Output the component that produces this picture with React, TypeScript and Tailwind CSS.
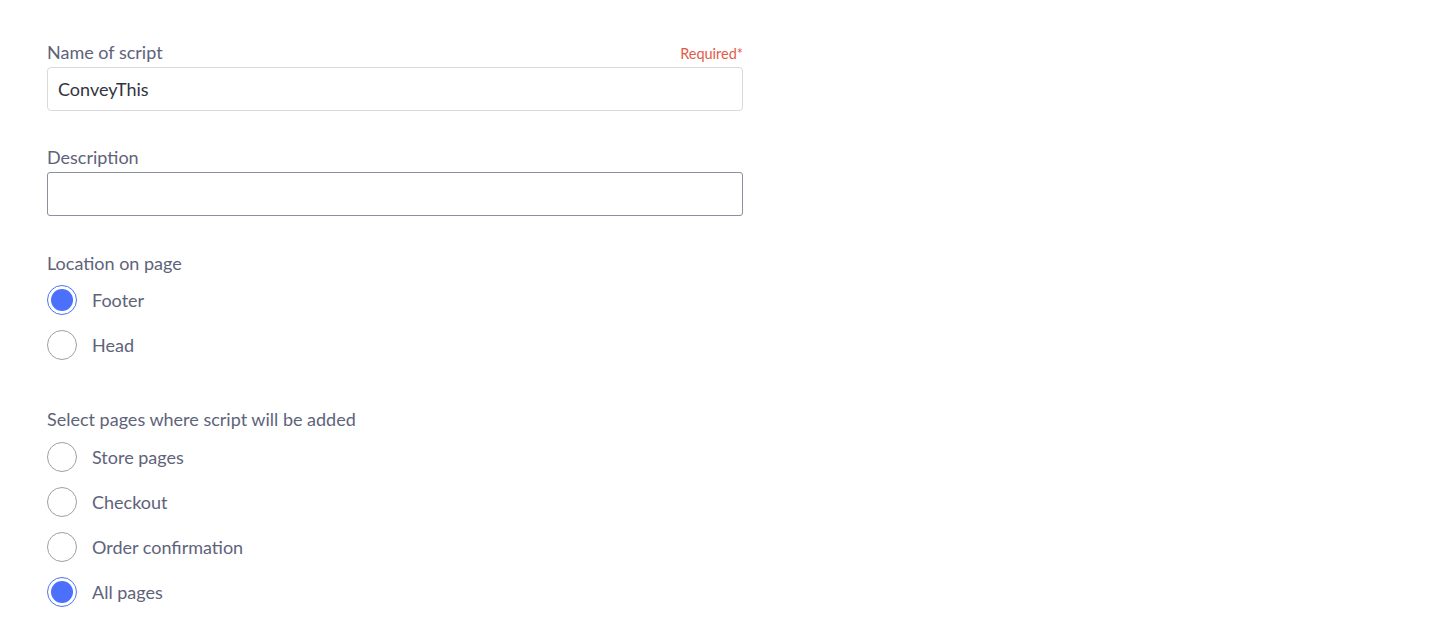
import React from "react";

// Script settings form: text inputs + radio groups

const font = { fontFamily: "Lato, 'Noto Sans', sans-serif" };

function Radio({ label, checked }: { label: string; checked?: boolean }) {
  return (
    <label className="flex items-center gap-[15px] h-[30px] cursor-pointer">
      {checked ? (
        <span className="w-[30px] h-[30px] rounded-full border border-[#4b71fc] p-[3px] flex">
          <span className="flex-1 rounded-full bg-[#4b71fc]" />
        </span>
      ) : (
        <span className="w-[30px] h-[30px] rounded-full border border-[#a0a0a0] bg-white" />
      )}
      <span className="text-[18px] leading-5 text-[#5e637a]">{label}</span>
    </label>
  );
}

export default function App() {
  return (
    <div className="min-h-screen bg-white pl-[47px] pt-[42px]" style={font}>
      <div className="w-[696px] flex flex-col">
        {/* Name of script */}
        <div className="flex items-end justify-between h-5 mb-[5px]">
          <span className="text-[18px] leading-5 text-[#5e637a]">Name of script</span>
          <span className="text-[14.5px] leading-4 text-[#e25b49]">Required*</span>
        </div>
        <div className="h-[44px] rounded-[4px] border border-[#d9d9dc] px-[10px] flex items-center text-[18px] text-[#313440]">
          ConveyThis
        </div>

        {/* Description */}
        <span className="mt-[36px] mb-[5px] text-[18px] leading-5 text-[#5e637a]">Description</span>
        <div className="h-[44px] rounded-[3px] border border-[#8c8f9c]" />

        {/* Location */}
        <span className="mt-[37px] mb-[12px] text-[18px] leading-5 text-[#5e637a]">Location on page</span>
        <div className="flex flex-col gap-[15px]">
          <Radio label="Footer" checked />
          <Radio label="Head" />
        </div>

        {/* Pages */}
        <span className="mt-[49px] mb-[13px] text-[18px] leading-5 text-[#5e637a]">
          Select pages where script will be added
        </span>
        <div className="flex flex-col gap-[15px]">
          <Radio label="Store pages" />
          <Radio label="Checkout" />
          <Radio label="Order confirmation" />
          <Radio label="All pages" checked />
        </div>
      </div>
    </div>
  );
}
